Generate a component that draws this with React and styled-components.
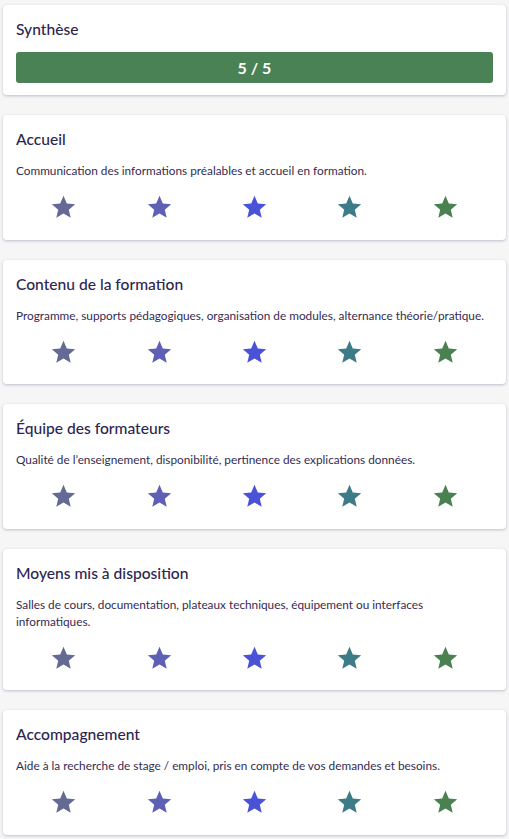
import styled, { createGlobalStyle } from "styled-components"

const GlobalStyle = createGlobalStyle`
    body {
        margin: 0;
        background-color: #f6f6f7;
        font-family: Lato, "Open Sans", sans-serif;
    }
`

const StyledPage = styled.div`
    display: flex;
    flex-direction: column;
    gap: 20px;
    padding: 5px 3px;
`
const StyledCard = styled.div`
    background-color: #fff;
    border-radius: 4px;
    padding: 13px 13px ${props => props.$tight ? '12px' : '19.5px'} 13px;
    box-shadow: 0px 1px 3px 0px rgba(60, 60, 100, 0.3);
`
const StyledCardTitle = styled.h2`
    margin: 0;
    font-size: 15.6px;
    line-height: 22px;
    font-weight: 500;
    color: #2c2550;
`
const StyledScoreBar = styled.div`
    margin-top: 12px;
    height: 31px;
    border-radius: 3px;
    background-color: #4a8155;
    color: #fff;
    display: flex;
    align-items: center;
    justify-content: center;
    font-size: 16px;
    font-weight: 700;
`
const StyledDescription = styled.p`
    margin: 12px 0 0 0;
    font-size: 11.8px;
    line-height: 17px;
    color: #352b52;
`
const StyledStars = styled.div`
    display: grid;
    grid-template-columns: repeat(5, 1fr);
    margin-top: 15px;
`
const StyledStar = styled.svg`
    justify-self: center;
    width: 27px;
    height: 26px;
    fill: ${props => props.$color};
`

const starColors = ['#656a94', '#5e60b6', '#4a52d8', '#3e7b89', '#4a8150']

const criteria = [
    { title: 'Accueil', text: 'Communication des informations préalables et accueil en formation.' },
    { title: 'Contenu de la formation', text: 'Programme, supports pédagogiques, organisation de modules, alternance théorie/pratique.' },
    { title: 'Équipe des formateurs', text: 'Qualité de l\u2019enseignement, disponibilité, pertinence des explications données.' },
    { title: 'Moyens mis à disposition', text: 'Salles de cours, documentation, plateaux techniques, équipement ou interfaces informatiques.', breakBefore: 'informatiques.' },
    { title: 'Accompagnement', text: 'Aide à la recherche de stage / emploi, pris en compte de vos demandes et besoins.' },
]

const Star = ({ color }) => (
    <StyledStar $color={color} viewBox="0 0 24 24">
        <path d="M12 1.6l3.05 7.1 7.7.66-5.85 5.07 1.76 7.53L12 17.98l-6.66 3.98 1.76-7.53L1.25 9.36l7.7-.66z" />
    </StyledStar>
)

const App = () => {
    return (
        <StyledPage>
            <GlobalStyle />
            <StyledCard $tight>
                <StyledCardTitle>Synthèse</StyledCardTitle>
                <StyledScoreBar>5 / 5</StyledScoreBar>
            </StyledCard>
            {criteria.map(item => (
                <StyledCard key={item.title}>
                    <StyledCardTitle>{item.title}</StyledCardTitle>
                    <StyledDescription>
                        {item.breakBefore
                            ? <>{item.text.replace(' ' + item.breakBefore, '')}<br />{item.breakBefore}</>
                            : item.text}
                    </StyledDescription>
                    <StyledStars>
                        {starColors.map(c => <Star key={c} color={c} />)}
                    </StyledStars>
                </StyledCard>
            ))}
        </StyledPage>
    )
}

export default App;
